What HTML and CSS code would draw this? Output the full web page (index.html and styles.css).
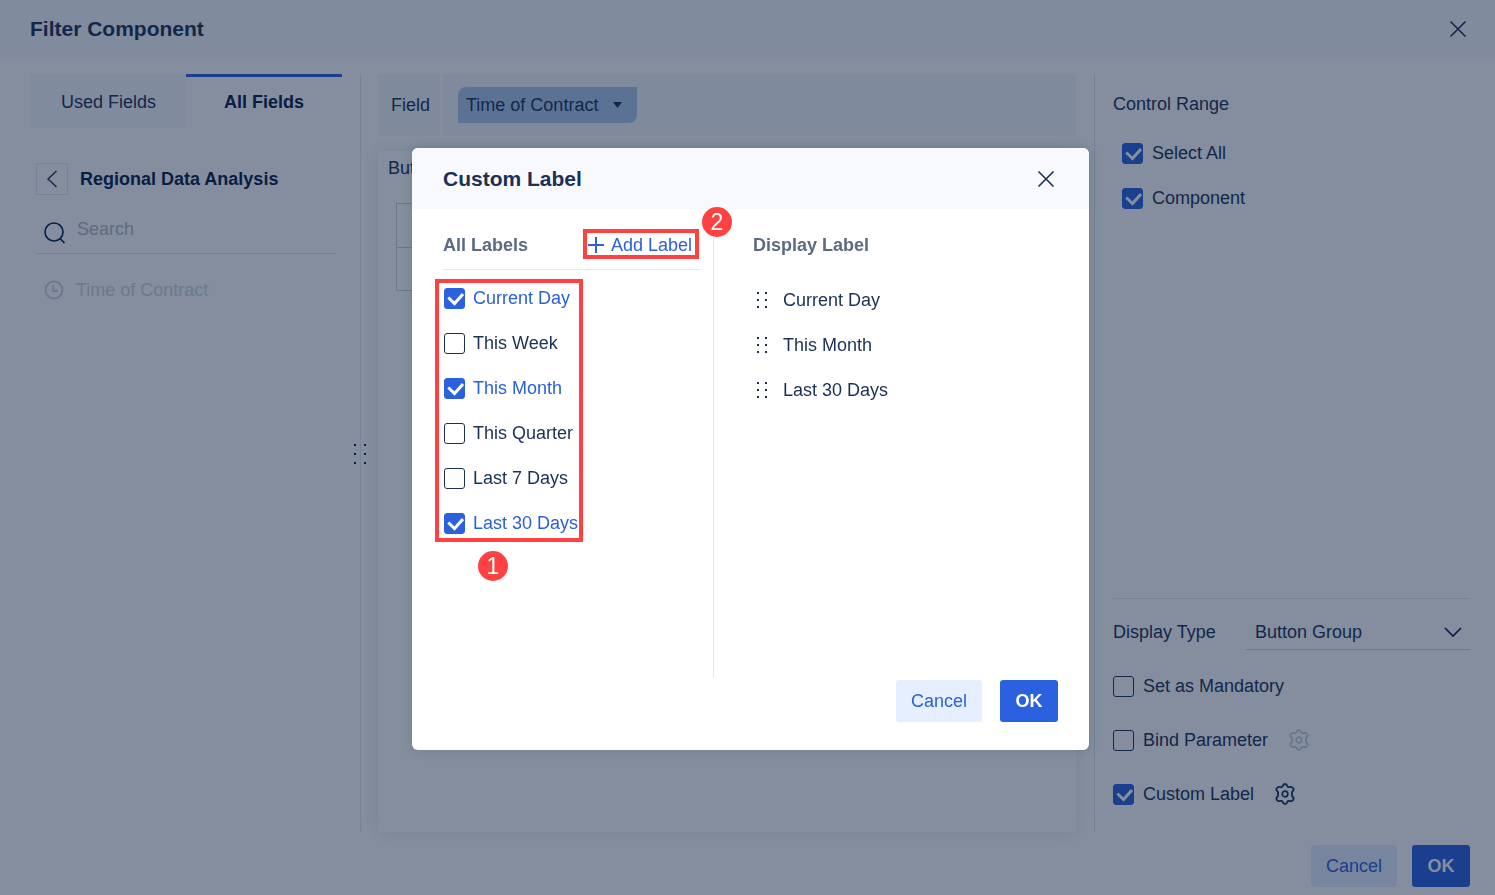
FILE: index.html
```html
<!DOCTYPE html>
<html lang="en">
<head>
<meta charset="utf-8">
<title>Filter Component</title>
<link rel="stylesheet" href="styles.css">
</head>
<body>
<svg class="sprite" aria-hidden="true">
  <symbol id="close" viewBox="0 0 18 18"><path d="M1.500 1.500l15 15M16.500 1.500l-15 15" fill="none" stroke="currentColor" stroke-width="1.600"/></symbol>
  <symbol id="dots" viewBox="0 0 12 18"><path d="M1 1h2v2H1zM9 1h2v2H9zM1 8h2v2H1zM9 8h2v2H9zM1 15h2v2H1zM9 15h2v2H9z" fill="currentColor"/></symbol>
  <symbol id="gear" viewBox="0 0 22 22"><path d="M8.500 3.300Q9.300 1 11 1t2.500 2.300q.5 1 1.700.8 2.600-.8 3.900.9 1.300 1.800-.6 3.500-.9.800-.6 1.500l.2 1-.2 1q-.3.700.6 1.500 1.900 1.700.6 3.500-1.300 1.700-3.900.9-1.200-.2-1.700.8Q12.700 21 11 21t-2.500-2.300q-.5-1-1.700-.8-2.600.8-3.900-.9-1.300-1.800.6-3.500.9-.8.6-1.500l-.2-1 .2-1q.3-.7-.6-1.500-1.900-1.700-.6-3.500 1.300-1.700 3.900-.9 1.200.2 1.700-.8z" fill="none" stroke="currentColor" stroke-width="1.800" stroke-linejoin="round"/><circle cx="11" cy="11" r="2.800" fill="none" stroke="currentColor" stroke-width="1.700"/></symbol>
</svg>

<div class="page">
  <header class="page-header">
    <h1 class="title">Filter Component</h1>
    <button class="icon-button" type="button" aria-label="Close"><svg width="18" height="18"><use href="#close"/></svg></button>
  </header>

  <main class="main">
    <aside class="sidebar">
      <div class="tabs" role="tablist">
        <button class="tab" type="button" role="tab" aria-selected="false">Used Fields</button>
        <button class="tab tab-active" type="button" role="tab" aria-selected="true">All Fields</button>
      </div>
      <div class="fields">
        <div class="dataset">
          <button class="back" type="button" aria-label="Back"><svg width="12" height="18" viewBox="0 0 12 18"><path d="M10.500 1L2 9l8.500 8" fill="none" stroke="currentColor" stroke-width="1.400"/></svg></button>
          <h2 class="dataset-name">Regional Data Analysis</h2>
        </div>
        <div class="search">
          <svg class="search-icon" width="22" height="22" viewBox="0 0 22 22"><circle cx="10" cy="10" r="9" fill="none" stroke="currentColor" stroke-width="1.600"/><path d="M16 16.500l4.500 4.500" stroke="currentColor" stroke-width="1.700"/></svg>
          <input class="search-input" type="text" placeholder="Search" aria-label="Search">
        </div>
        <div class="field-item">
          <svg width="20" height="20" viewBox="0 0 20 20"><circle cx="10" cy="10" r="8.500" fill="none" stroke="currentColor" stroke-width="1.900"/><path d="M9.200 5v6H14" fill="none" stroke="currentColor" stroke-width="1.900"/></svg>
          <span>Time of Contract</span>
        </div>
      </div>
      <span class="resize-handle"><svg width="14" height="20" viewBox="0 0 14 20"><path d="M1 0h2v2H1zM11 0h2v2h-2zM1 9h2v2H1zM11 9h2v2h-2zM1 18h2v2H1zM11 18h2v2h-2z" fill="currentColor"/></svg></span>
    </aside>

    <section class="center">
      <div class="field-bar">
        <span class="field-label">Field</span>
        <div class="field-slot">
          <button class="chip" type="button">Time of Contract<svg width="10" height="6" viewBox="0 0 10 6"><path d="M0 0h9L4.500 6z" fill="currentColor"/></svg></button>
        </div>
      </div>
      <div class="preview">
        <span>Button</span>
        <div class="preview-group"><div class="preview-cell"></div><div class="preview-cell"></div></div>
      </div>
    </section>

    <aside class="settings">
      <h2 class="settings-title">Control Range</h2>
      <div class="range-list">
        <label class="option"><input class="check" type="checkbox" checked><span>Select All</span></label>
        <label class="option"><input class="check" type="checkbox" checked><span>Component</span></label>
      </div>
      <div class="display-settings">
        <div class="type-row">
          <label for="display-type">Display Type</label>
          <select class="select" id="display-type"><option>Button Group</option></select>
        </div>
        <div class="setting"><label class="option"><input class="check" type="checkbox"><span>Set as Mandatory</span></label></div>
        <div class="setting">
          <label class="option"><input class="check" type="checkbox"><span>Bind Parameter</span></label>
          <button class="icon-button icon-disabled" type="button" disabled aria-label="Parameter settings"><svg width="22" height="22"><use href="#gear"/></svg></button>
        </div>
        <div class="setting">
          <label class="option"><input class="check" type="checkbox" checked><span>Custom Label</span></label>
          <button class="icon-button" type="button" aria-label="Label settings"><svg width="22" height="22"><use href="#gear"/></svg></button>
        </div>
      </div>
    </aside>
  </main>

  <footer class="page-footer">
    <button class="button" type="button">Cancel</button>
    <button class="button button-primary" type="button">OK</button>
  </footer>
</div>

<div class="overlay">
  <div class="dialog" role="dialog" aria-modal="true" aria-labelledby="dialog-title">
    <header class="dialog-header">
      <h2 class="title" id="dialog-title">Custom Label</h2>
      <button class="icon-button" type="button" aria-label="Close"><svg width="18" height="18"><use href="#close"/></svg></button>
    </header>
    <div class="dialog-body">
      <section class="all-labels">
        <div class="labels-head">
          <h3 class="subtitle">All Labels</h3>
          <button class="add-label" type="button"><svg width="16" height="16" viewBox="0 0 16 16"><path d="M8 0v16M0 8h16" stroke="currentColor" stroke-width="2"/></svg>Add Label</button>
          <span class="badge badge-two">2</span>
        </div>
        <div class="label-list">
          <label class="label-item"><input class="check" type="checkbox" checked><span>Current Day</span></label>
          <label class="label-item"><input class="check" type="checkbox"><span>This Week</span></label>
          <label class="label-item"><input class="check" type="checkbox" checked><span>This Month</span></label>
          <label class="label-item"><input class="check" type="checkbox"><span>This Quarter</span></label>
          <label class="label-item"><input class="check" type="checkbox"><span>Last 7 Days</span></label>
          <label class="label-item"><input class="check" type="checkbox" checked><span>Last 30 Days</span></label>
          <span class="badge badge-one">1</span>
        </div>
      </section>
      <section class="display-labels">
        <h3 class="subtitle">Display Label</h3>
        <ul class="display-list">
          <li class="display-item"><svg width="12" height="18"><use href="#dots"/></svg>Current Day</li>
          <li class="display-item"><svg width="12" height="18"><use href="#dots"/></svg>This Month</li>
          <li class="display-item"><svg width="12" height="18"><use href="#dots"/></svg>Last 30 Days</li>
        </ul>
      </section>
    </div>
    <footer class="dialog-footer">
      <button class="button" type="button">Cancel</button>
      <button class="button button-primary" type="button">OK</button>
    </footer>
  </div>
</div>
</body>
</html>
```
FILE: styles.css
```css
:root {
  --text: #1b3054;
  --strong: #061d49;
  --muted: #5c6b82;
  --blue: #2b60de;
  --red: #ff4141;
  --line: #e1e8ee;
  --pale: #f7f9fd;
}

* { box-sizing: border-box; }

body {
  margin: 0;
  font: 18px/24px "Liberation Sans", Arial, sans-serif;
  color: var(--text);
  background: #fff;
}

h1, h2, h3, ul { margin: 0; padding: 0; font-weight: 400; font-size: 18px; }
ul { list-style: none; }
button, input, select { font: inherit; color: inherit; }
button { border: 0; padding: 0; background: none; cursor: pointer; }
svg { display: block; flex: none; }
.sprite { display: none; }

.page { display: flex; flex-direction: column; min-height: 100vh; }

.page-header,
.dialog-header {
  display: flex;
  align-items: center;
  justify-content: space-between;
  background: var(--pale);
}
.page-header { height: 59px; padding: 0 28px 2px 30px; }
.title { font-size: 21px; font-weight: 700; }

.main {
  flex: 1;
  display: grid;
  grid-template-columns: 331px 1fr 376px;
  padding: 15px 25px 0 30px;
}

.sidebar {
  position: relative;
  padding-right: 18px;
  border-right: 1px solid var(--line);
}
.tabs { display: grid; grid-template-columns: 1fr 1fr; height: 54px; }
.tab { padding: 2px 0 0 1px; background: var(--pale); }
.tab-active {
  padding: 0 0 2px;
  background: none;
  border-top: 3px solid var(--blue);
  font-weight: 700;
  color: var(--strong);
}
.fields { padding: 35px 6px 0; }
.dataset { display: flex; align-items: center; gap: 12px; }
.back {
  display: grid;
  place-items: center;
  width: 32px;
  height: 32px;
  border: 1px solid var(--line);
}
.dataset-name { font-weight: 700; color: var(--strong); }
.search {
  display: flex;
  gap: 11px;
  height: 44px;
  margin-top: 15px;
  padding-left: 8px;
  border-bottom: 1px solid #d8dfe8;
}
.search-icon { align-self: flex-end; margin-bottom: 9px; color: var(--strong); }
.search-input {
  flex: 1;
  min-width: 0;
  height: 38px;
  padding: 0;
  border: 0;
  outline: 0;
  background: none;
}
.search-input::placeholder { color: #b0b8c6; opacity: 1; }
.field-item {
  display: flex;
  align-items: center;
  gap: 12px;
  margin-top: 24px;
  padding-left: 8px;
  color: #ccd4de;
}
.resize-handle {
  position: absolute;
  top: 50%;
  right: -7px;
  margin-top: -9px;
  color: var(--strong);
}

.center { display: flex; flex-direction: column; gap: 15px; padding: 0 18px 0 17px; }
.field-bar { display: flex; gap: 3px; height: 62px; }
.field-label,
.field-slot { display: flex; align-items: center; background: #f5f8fc; }
.field-label { padding: 0 10px 0 13px; }
.field-slot { flex: 1; padding-left: 15px; }
.chip {
  display: flex;
  align-items: center;
  gap: 15px;
  height: 36px;
  padding: 0 14px 0 8px;
  border-radius: 8px 0 8px 0;
  background: #acc7ed;
}
.preview {
  flex: 1;
  padding: 5px 18px 0 10px;
  box-shadow: 0 0 16px rgba(40, 60, 100, .12);
}
.preview-group { margin: 23px 0 0 8px; border: 1px solid #c6cfde; }
.preview-cell { height: 43px; }
.preview-cell + .preview-cell { border-top: 1px solid #c6cfde; }

.settings {
  display: flex;
  flex-direction: column;
  padding: 18px 0 11px 18px;
  border-left: 1px solid var(--line);
}
.range-list { display: flex; flex-direction: column; gap: 21px; padding: 25px 0 0 9px; }
.option { display: flex; align-items: center; gap: 9px; }
.check {
  appearance: none;
  flex: none;
  width: 21px;
  height: 21px;
  margin: 0;
  border: 1px solid var(--text);
  border-radius: 3px;
}
.check:checked {
  border-color: var(--blue);
  background: var(--blue) url("data:image/svg+xml,%3Csvg xmlns='http://www.w3.org/2000/svg' viewBox='0 0 21 21'%3E%3Cpath d='M4.300 9.500l6.200 6L19 6' fill='none' stroke='white' stroke-width='3'/%3E%3C/svg%3E") border-box center / 21px 21px;
}
.display-settings { margin-top: auto; border-top: 1px solid var(--line); }
.type-row {
  display: grid;
  grid-template-columns: 133px 1fr;
  align-items: center;
  height: 60px;
  padding-top: 6px;
}
.select {
  appearance: none;
  height: 36px;
  padding: 0 9px;
  border: 0;
  border-bottom: 1px solid #cfd7e2;
  border-radius: 0;
  background: url("data:image/svg+xml,%3Csvg xmlns='http://www.w3.org/2000/svg' viewBox='0 0 18 10'%3E%3Cpath d='M1 1l8 8 8-8' fill='none' stroke='%23061d49' stroke-width='1.700'/%3E%3C/svg%3E") right 8px center / 18px 10px no-repeat;
}
.setting { display: flex; align-items: center; gap: 20px; height: 54px; }
.icon-disabled { color: #c6cfda; }

.button {
  min-width: 58px;
  height: 42px;
  padding: 0 15px;
  border-radius: 3px;
  background: #e5efff;
  color: var(--blue);
}
.button-primary { background: var(--blue); color: #fff; font-weight: 700; }
.page-footer { display: flex; justify-content: flex-end; gap: 15px; padding: 13px 25px 8px; }

.overlay { position: fixed; inset: 0; background: rgba(10, 29, 61, .5); }
.dialog {
  position: absolute;
  left: 412px;
  top: 148px;
  width: 677px;
  border-radius: 6px;
  background: #fff;
  box-shadow: 0 0 12px rgba(10, 29, 61, .15);
}
.dialog-header { height: 61px; padding: 0 34px 0 31px; border-radius: 6px 6px 0 0; }
.dialog-body { display: grid; grid-template-columns: 271px 1fr; padding: 20px 31px 2px; }
.all-labels { min-height: 449px; padding-right: 12px; border-right: 1px solid var(--line); }
.subtitle { line-height: 32px; font-weight: 700; color: var(--muted); }
.labels-head {
  position: relative;
  display: flex;
  align-items: flex-start;
  justify-content: space-between;
  height: 41px;
  padding-right: 2px;
  border-bottom: 1px solid #e5e7ec;
}
.add-label {
  display: flex;
  align-items: center;
  gap: 7px;
  height: 30px;
  padding: 2px 3px 0 1px;
  border: 4px solid var(--red);
  color: var(--blue);
}
.badge {
  position: absolute;
  display: grid;
  place-items: center;
  width: 30px;
  height: 30px;
  border-radius: 50%;
  background: var(--red);
  color: #fff;
  font-size: 23px;
}
.badge-two { top: -22px; right: -31px; }
.badge-one { left: 39px; bottom: -43px; }
.label-list {
  position: relative;
  display: flex;
  flex-direction: column;
  gap: 15px;
  width: fit-content;
  margin: 9px 0 0 -8px;
  padding: 0 1px 0 5px;
  border: 4px solid var(--red);
}
.label-item { display: flex; align-items: center; gap: 8px; height: 30px; }
.label-item:has(:checked) { color: var(--blue); }
.display-labels { padding-left: 39px; }
.display-list { display: flex; flex-direction: column; gap: 15px; padding: 24px 0 0 3px; }
.display-item { display: flex; align-items: center; gap: 15px; height: 30px; }
.dialog-footer { display: flex; justify-content: flex-end; gap: 18px; padding: 0 31px 28px; }
```
